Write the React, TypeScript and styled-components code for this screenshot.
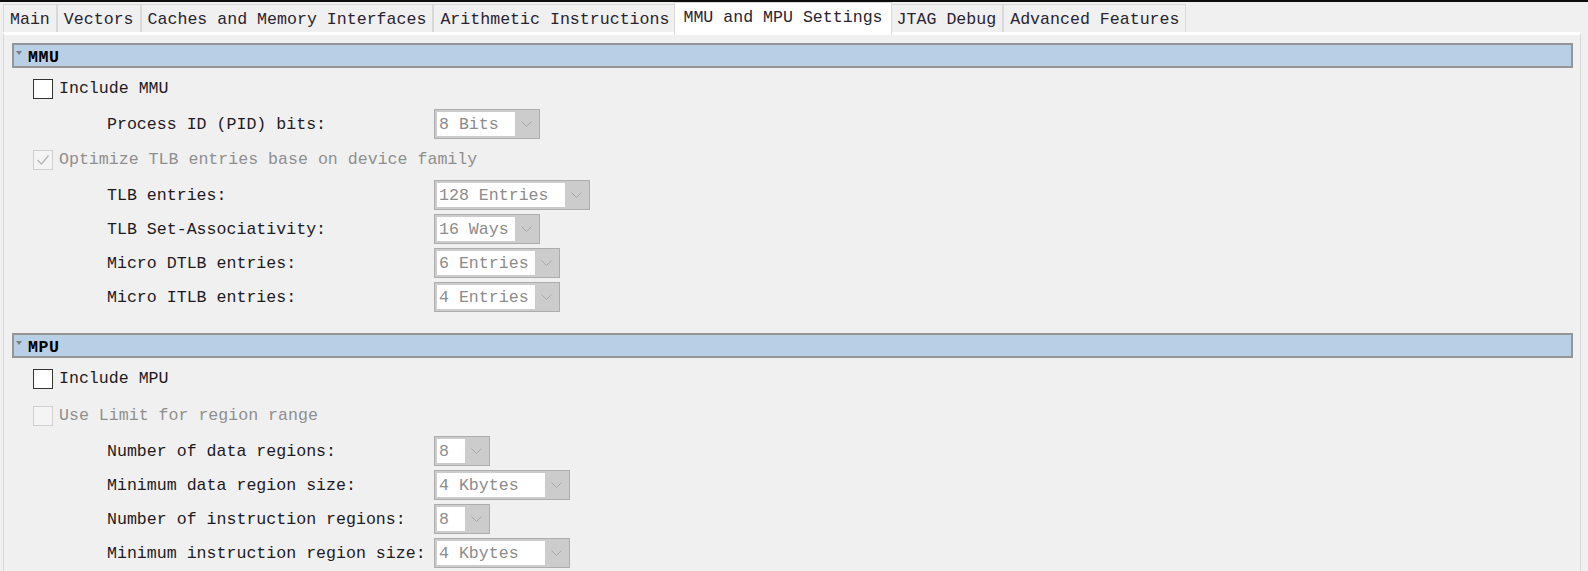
import * as React from "react";
import styled, { createGlobalStyle } from "styled-components";

const GlobalStyle = createGlobalStyle`
  html, body {
    margin: 0;
    padding: 0;
    background: #f0f0f0;
  }

  body {
    font-family: "Liberation Mono", "DejaVu Sans Mono", monospace;
    font-size: 16.6px;
    color: #1e1e1e;
  }
`;

const Window = styled.div`
  box-sizing: border-box;
  min-height: 571px;
  border-top: 2px solid #0d0d0d;
  overflow: hidden;
`;

const TabBar = styled.div`
  display: flex;
  align-items: flex-end;
  height: 30px;
  padding-left: 3px;
`;

const Tab = styled.div<{ $active?: boolean }>`
  box-sizing: border-box;
  display: flex;
  align-items: ${(p) => (p.$active ? "flex-start" : "center")};
  height: ${(p) => (p.$active ? "33px" : "28px")};
  margin: ${(p) => (p.$active ? "0 -2px -3px" : "0")};
  padding: ${(p) => (p.$active ? "7px 8px 0" : "3px 6px 0")};
  border: 1px solid #d9d9d9;
  border-bottom: none;
  background: ${(p) => (p.$active ? "#fff" : "#f0f0f0")};
  color: #2a2430;
  white-space: nowrap;
  line-height: 1;
  position: relative;
  z-index: ${(p) => (p.$active ? 1 : 0)};
`;

const Panel = styled.div`
  margin: 0 7px 0 3px;
  padding: 8px 7px 0 8px;
  border: 1px solid #d9d9d9;
  border-top: 3px solid #fff;
  min-height: 540px;
`;

const Section = styled.section<{ $gap?: number }>`
  margin-bottom: ${(p) => p.$gap ?? 0}px;
`;

const Header = styled.div`
  box-sizing: border-box;
  display: flex;
  align-items: center;
  height: 25px;
  border: 2px solid #959595;
  background: #b8cfe5;
`;

const Caret = styled.span`
  align-self: flex-start;
  margin: 6px 6px 0 2px;
  width: 0;
  height: 0;
  border-left: 3.5px solid transparent;
  border-right: 3.5px solid transparent;
  border-top: 4px solid #7c7c7c;
`;

const Title = styled.span`
  padding-top: 3px;
  font-weight: 700;
  color: #000;
  letter-spacing: 0.5px;
`;

const Body = styled.div`
  padding-top: 2px;
`;

const CheckRow = styled.label<{ $disabled?: boolean }>`
  display: flex;
  align-items: center;
  gap: 6px;
  height: 37px;
  padding-left: 21px;
  color: ${(p) => (p.$disabled ? "#8f8f8f" : "#1e1a22")};
`;

const Box = styled.span<{ $disabled?: boolean }>`
  box-sizing: border-box;
  display: flex;
  align-items: center;
  justify-content: center;
  width: 20px;
  height: 20px;
  border: 1px solid ${(p) => (p.$disabled ? "#d0d0d0" : "#333")};
  background: ${(p) => (p.$disabled ? "#f4f4f4" : "#fff")};
`;

const FieldRow = styled.div`
  display: flex;
  align-items: center;
  height: 34px;
  padding-left: 95px;
`;

const Label = styled.span`
  width: 327px;
  color: #1e1a22;
  white-space: nowrap;
`;

const Select = styled.div`
  box-sizing: border-box;
  display: flex;
  height: 30px;
  padding: 2px;
  border: 1px solid #adadad;
  background: #cccccc;
`;

const Value = styled.span`
  flex: 1;
  display: flex;
  align-items: center;
  padding-left: 2px;
  background: #fff;
  color: #8c8c8c;
  white-space: nowrap;
  overflow: hidden;
`;

const Arrow = styled.span`
  display: flex;
  align-items: center;
  justify-content: center;
  width: 22px;
`;

function CheckBox({
  label,
  checked,
  disabled,
}: {
  label: string;
  checked?: boolean;
  disabled?: boolean;
}) {
  return (
    <CheckRow $disabled={disabled}>
      <Box $disabled={disabled}>
        {checked && (
          <svg width="14" height="12" viewBox="0 0 14 12">
            <polyline
              points="1.5,6 5.5,10 12.5,1.5"
              fill="none"
              stroke="#b4b4b4"
              strokeWidth="1.3"
            />
          </svg>
        )}
      </Box>
      {label}
    </CheckRow>
  );
}

function Field({ label, value, width }: { label: string; value: string; width: number }) {
  return (
    <FieldRow>
      <Label>{label}</Label>
      <Select style={{ width }}>
        <Value>{value}</Value>
        <Arrow>
          <svg width="11" height="6" viewBox="0 0 11 6">
            <polyline points="0.5,0.5 5.5,5.5 10.5,0.5" fill="none" stroke="#a8a8a8" strokeWidth="1" />
          </svg>
        </Arrow>
      </Select>
    </FieldRow>
  );
}

const tabs = [
  "Main",
  "Vectors",
  "Caches and Memory Interfaces",
  "Arithmetic Instructions",
  "MMU and MPU Settings",
  "JTAG Debug",
  "Advanced Features",
];

function App() {
  return (
    <Window>
      <GlobalStyle />
      <TabBar>
        {tabs.map((t) => (
          <Tab key={t} $active={t === "MMU and MPU Settings"}>
            {t}
          </Tab>
        ))}
      </TabBar>
      <Panel>
        <Section $gap={19}>
          <Header>
            <Caret />
            <Title>MMU</Title>
          </Header>
          <Body>
            <CheckBox label="Include MMU" />
            <Field label="Process ID (PID) bits:" value="8 Bits" width={106} />
            <CheckBox label="Optimize TLB entries base on device family" checked disabled />
            <Field label="TLB entries:" value="128 Entries" width={156} />
            <Field label="TLB Set-Associativity:" value="16 Ways" width={106} />
            <Field label="Micro DTLB entries:" value="6 Entries" width={126} />
            <Field label="Micro ITLB entries:" value="4 Entries" width={126} />
          </Body>
        </Section>
        <Section>
          <Header>
            <Caret />
            <Title>MPU</Title>
          </Header>
          <Body>
            <CheckBox label="Include MPU" />
            <CheckBox label="Use Limit for region range" disabled />
            <Field label="Number of data regions:" value="8" width={56} />
            <Field label="Minimum data region size:" value="4 Kbytes" width={136} />
            <Field label="Number of instruction regions:" value="8" width={56} />
            <Field label="Minimum instruction region size:" value="4 Kbytes" width={136} />
          </Body>
        </Section>
      </Panel>
    </Window>
  );
}

export default App;
